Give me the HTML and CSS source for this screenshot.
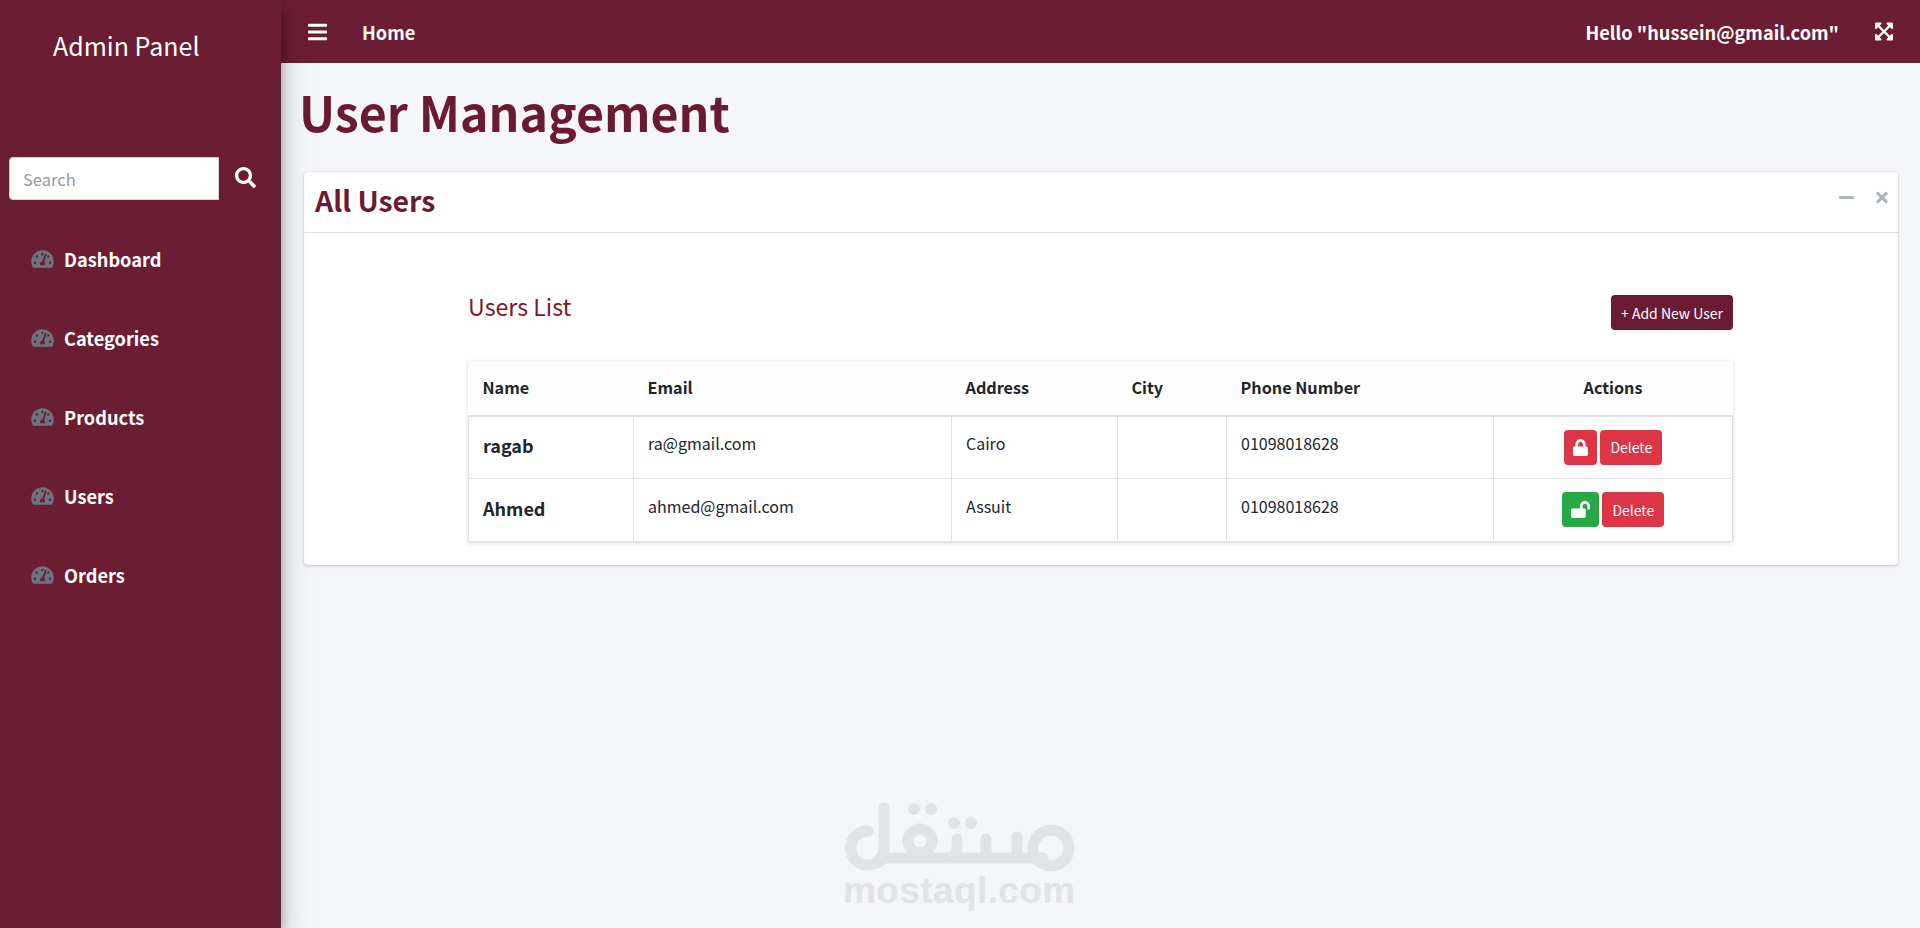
FILE: index.html
```html
<!DOCTYPE html>
<html lang="en">
<head>
<meta charset="UTF-8">
<meta name="viewport" content="width=device-width, initial-scale=1.0">
<title>User Management</title>
<link rel="stylesheet" href="styles.css">
</head>
<body>
<svg class="sprite" aria-hidden="true">
    <symbol id="i-gauge" viewBox="0 0 576 512"><path d="M288 32C128.94 32 0 160.94 0 320c0 52.8 14.25 102.26 39.06 144.8 5.61 9.62 16.3 15.2 27.44 15.2h443c11.14 0 21.83-5.58 27.44-15.2C561.75 422.26 576 372.8 576 320c0-159.06-128.94-288-288-288zm0 64c14.71 0 26.58 10.13 30.32 23.65-1.11 2.26-2.64 4.23-3.45 6.67l-9.22 27.67c-5.13 3.49-10.97 6.01-17.64 6.01-17.67 0-32-14.33-32-32S270.33 96 288 96zM96 384c-17.67 0-32-14.33-32-32s14.33-32 32-32 32 14.33 32 32-14.33 32-32 32zm48-160c-17.67 0-32-14.33-32-32s14.33-32 32-32 32 14.33 32 32-14.33 32-32 32zm246.77-72.41l-61.33 184C343.13 347.33 352 364.54 352 384c0 11.72-3.38 22.55-8.88 32H232.88c-5.5-9.45-8.88-20.28-8.88-32 0-33.94 26.5-61.43 59.9-63.59l61.34-184.01c4.17-12.56 17.73-19.45 30.36-15.17 12.57 4.19 19.35 17.79 15.17 30.36zm14.66 57.2l15.52-46.55c3.47-1.29 7.13-2.23 11.05-2.23 17.67 0 32 14.33 32 32s-14.33 32-32 32c-11.38-.01-20.89-6.28-26.57-15.22zM480 384c-17.67 0-32-14.33-32-32s14.33-32 32-32 32 14.33 32 32-14.33 32-32 32z"/></symbol>
    <symbol id="i-search" viewBox="0 0 512 512"><path d="M505 442.7L405.3 343c-4.5-4.5-10.6-7-17-7H372c27.6-35.3 44-79.7 44-128C416 93.1 322.9 0 208 0S0 93.1 0 208s93.1 208 208 208c48.3 0 92.7-16.4 128-44v16.3c0 6.4 2.5 12.5 7 17l99.7 99.7c9.4 9.4 24.6 9.4 33.9 0l28.3-28.3c9.4-9.4 9.4-24.6.1-34zM208 336c-70.7 0-128-57.2-128-128 0-70.7 57.2-128 128-128 70.7 0 128 57.2 128 128 0 70.7-57.2 128-128 128z"/></symbol>
    <symbol id="i-bars" viewBox="0 0 448 512"><path d="M16 132h416c8.837 0 16-7.163 16-16V76c0-8.837-7.163-16-16-16H16C7.163 60 0 67.163 0 76v40c0 8.837 7.163 16 16 16zm0 160h416c8.837 0 16-7.163 16-16v-40c0-8.837-7.163-16-16-16H16c-8.837 0-16 7.163-16 16v40c0 8.837 7.163 16 16 16zm0 160h416c8.837 0 16-7.163 16-16v-40c0-8.837-7.163-16-16-16H16c-8.837 0-16 7.163-16 16v40c0 8.837 7.163 16 16 16z"/></symbol>
    <symbol id="i-expand" viewBox="0 0 448 512"><path d="M448 344v112a23.94 23.94 0 0 1-24 24H312c-21.39 0-32.09-25.9-17-41l36.2-36.2L224 295.6 116.77 402.9 153 439c15.09 15.1 4.39 41-17 41H24a23.94 23.94 0 0 1-24-24V344c0-21.4 25.89-32.1 41-17l36.19 36.2L184.46 256 77.18 148.7 41 185c-15.1 15.1-41 4.4-41-17V56a23.94 23.94 0 0 1 24-24h112c21.39 0 32.09 25.9 17 41l-36.2 36.2L224 216.4l107.23-107.3L295 73c-15.09-15.1-4.39-41 17-41h112a23.94 23.94 0 0 1 24 24v112c0 21.4-25.89 32.1-41 17l-36.19-36.2L263.54 256l107.28 107.3L407 327.1c15.1-15.2 41-4.5 41 16.9z"/></symbol>
    <symbol id="i-lock" viewBox="0 0 448 512"><path d="M400 224h-24v-72C376 68.2 307.8 0 224 0S72 68.2 72 152v72H48c-26.5 0-48 21.5-48 48v192c0 26.5 21.5 48 48 48h352c26.5 0 48-21.5 48-48V272c0-26.5-21.5-48-48-48zm-104 0H152v-72c0-39.7 32.3-72 72-72s72 32.3 72 72v72z"/></symbol>
    <symbol id="i-open" viewBox="0 0 576 512"><path d="M423.5 0C339.5.3 272 69.5 272 153.5V224H48c-26.5 0-48 21.5-48 48v192c0 26.5 21.5 48 48 48h352c26.5 0 48-21.5 48-48V272c0-26.5-21.5-48-48-48h-48v-71.1c0-39.6 31.7-72.5 71.3-72.9 40-.4 72.7 32.1 72.7 72v80c0 13.3 10.7 24 24 24h32c13.3 0 24-10.7 24-24v-80C576 68 507.5-.3 423.5 0z"/></symbol>
    <symbol id="i-minus" viewBox="0 0 448 512"><path d="M416 208H32c-17.67 0-32 14.33-32 32v32c0 17.67 14.33 32 32 32h384c17.67 0 32-14.33 32-32v-32c0-17.67-14.33-32-32-32z"/></symbol>
    <symbol id="i-times" viewBox="0 0 352 512"><path d="M242.72 256l100.07-100.07c12.28-12.28 12.28-32.19 0-44.48l-22.24-22.24c-12.28-12.28-32.19-12.28-44.48 0L176 189.28 75.93 89.21c-12.28-12.28-32.19-12.28-44.48 0L9.21 111.45c-12.28 12.28-12.28 32.19 0 44.48L109.28 256 9.21 356.07c-12.28 12.28-12.28 32.19 0 44.48l22.24 22.24c12.28 12.28 32.2 12.28 44.48 0L176 322.72l100.07 100.07c12.28 12.28 32.2 12.28 44.48 0l22.24-22.24c12.28-12.28 12.28-32.19 0-44.48L242.72 256z"/></symbol>
</svg>

<div class="wrapper">
    <aside class="sidebar">
        <div class="brand">Admin Panel</div>
        <form class="search">
            <input class="search-input" type="text" placeholder="Search">
            <svg class="search-icon"><use href="#i-search"/></svg>
        </form>
        <nav class="side-nav">
            <a class="side-link"><svg class="gauge"><use href="#i-gauge"/></svg>Dashboard</a>
            <a class="side-link"><svg class="gauge"><use href="#i-gauge"/></svg>Categories</a>
            <a class="side-link"><svg class="gauge"><use href="#i-gauge"/></svg>Products</a>
            <a class="side-link"><svg class="gauge"><use href="#i-gauge"/></svg>Users</a>
            <a class="side-link"><svg class="gauge"><use href="#i-gauge"/></svg>Orders</a>
        </nav>
    </aside>

    <div class="content">
        <header class="topbar">
            <svg class="bars"><use href="#i-bars"/></svg>
            <span class="home">Home</span>
            <span class="hello">Hello "hussein@gmail.com"</span>
            <svg class="expand"><use href="#i-expand"/></svg>
        </header>

        <main class="page">
            <h1 class="page-title">User Management</h1>
            <section class="card">
                <div class="card-header">
                    <h2 class="card-title">All Users</h2>
                    <div class="card-tools">
                        <svg class="tool-minus"><use href="#i-minus"/></svg>
                        <svg class="tool-times"><use href="#i-times"/></svg>
                    </div>
                </div>
                <div class="card-body">
                    <div class="list-head">
                        <h3 class="list-title">Users List</h3>
                        <a class="btn btn-add">+ Add New User</a>
                    </div>
                    <table class="users">
                        <colgroup>
                            <col class="c-name"><col class="c-email"><col class="c-address"><col class="c-city"><col class="c-phone"><col class="c-actions">
                        </colgroup>
                        <thead>
                            <tr>
                                <th>Name</th>
                                <th>Email</th>
                                <th>Address</th>
                                <th>City</th>
                                <th>Phone Number</th>
                                <th class="center">Actions</th>
                            </tr>
                        </thead>
                        <tbody>
                            <tr>
                                <td class="name">ragab</td>
                                <td>ra@gmail.com</td>
                                <td>Cairo</td>
                                <td></td>
                                <td>01098018628</td>
                                <td class="actions">
                                    <a class="btn btn-red btn-icon"><svg class="lock"><use href="#i-lock"/></svg></a>
                                    <a class="btn btn-red">Delete</a>
                                </td>
                            </tr>
                            <tr class="row-last">
                                <td class="name">Ahmed</td>
                                <td>ahmed@gmail.com</td>
                                <td>Assuit</td>
                                <td></td>
                                <td>01098018628</td>
                                <td class="actions">
                                    <a class="btn btn-green btn-icon"><svg class="unlock"><use href="#i-open"/></svg></a>
                                    <a class="btn btn-red">Delete</a>
                                </td>
                            </tr>
                        </tbody>
                    </table>
                </div>
            </section>
        </main>
    </div>
</div>

<!-- site watermark laid over the page -->
<div class="watermark">
    <svg class="wm-logo" viewBox="0 0 232 68">
        <g fill="none" stroke="#e1e3e6" stroke-width="11" stroke-linecap="round">
            <path d="M25 28 A17 17 0 0 0 24 62 Q35 62 41 55 H200"/>
            <path d="M41 5 V44 Q41 54 34 58"/>
            <circle cx="77" cy="38" r="12"/>
            <path d="M114 36 V46 Q114 55 104 55"/>
            <path d="M143 36 V55"/>
            <path d="M174 34 V55"/>
            <circle cx="208" cy="45" r="18"/>
        </g>
        <g fill="#e1e3e6">
            <circle cx="71" cy="6" r="6"/>
            <circle cx="88" cy="6" r="6"/>
            <circle cx="111" cy="20" r="6"/>
            <circle cx="128" cy="20" r="6"/>
        </g>
    </svg>
    <div class="wm-text">mostaql.com</div>
</div>
</body>
</html>
```

FILE: styles.css
```css
* {
    box-sizing: border-box;
}
body {
    margin: 0;
    height: 928px;
    overflow: hidden;
    background-color: #f4f6f9;
    color: #212529;
    font-family: "Noto Sans CJK SC", "Open Sans", sans-serif;
    font-size: 16px;
    line-height: 24px;
}
h1, h2, h3 {
    margin: 0;
}
.sprite {
    display: none;
}
svg {
    fill: currentColor;
    flex: none;
}
.wrapper {
    display: flex;
    height: 928px;
}

/* sidebar */
.sidebar {
    position: relative;
    z-index: 2;
    width: 281px;
    flex: none;
    padding-top: 24px;
    background-color: #6b1d33;
    color: #fff;
    box-shadow: 0 14px 28px rgba(0, 0, 0, .25), 0 10px 10px rgba(0, 0, 0, .22);
}
.brand {
    margin-left: 53px;
    font-size: 25px;
    line-height: 42px;
    font-weight: 400;
}
.search {
    display: flex;
    align-items: center;
    margin: 91px 0 0 9px;
}
.search-input {
    width: 210px;
    height: 43px;
    padding: 0 13px;
    border: 1px solid #ced4da;
    border-radius: 4px 0 0 4px;
    background: #fff;
    font: 16.5px "Noto Sans CJK SC", sans-serif;
}
.search-input::placeholder {
    color: #939ba2;
}
.search-icon {
    width: 21px;
    height: 21px;
    margin: -3px 0 0 16px;
}
.side-nav {
    display: flex;
    flex-direction: column;
    gap: 49px;
    margin: 44px 0 0 31px;
}
.side-link {
    display: flex;
    align-items: center;
    height: 30px;
    font-size: 18.2px;
    font-weight: 700;
}
.gauge {
    width: 23px;
    height: 20px;
    margin-right: 10px;
    color: #6c757d;
}

/* top bar */
.content {
    flex: 1;
    min-width: 0;
}
.topbar {
    display: flex;
    align-items: center;
    height: 63px;
    padding: 0 27px 0 27px;
    background-color: #6b1d33;
    color: #fff;
    font-size: 18.2px;
    font-weight: 700;
}
.bars {
    width: 19px;
    height: 22px;
}
.home {
    margin-left: 35px;
}
.hello {
    margin-left: auto;
}
.expand {
    width: 18px;
    height: 21px;
    margin-left: 36px;
}

/* page */
.page {
    padding: 12px 22px 0 18px;
}
.page-title {
    color: #6b1a33;
    font-size: 48.3px;
    line-height: 72px;
    font-weight: 700;
}
.card {
    margin: 25px 0 0 5px;
    border-radius: 4px;
    background: #fff;
    box-shadow: 0 0 1px rgba(0, 0, 0, .125), 0 1px 3px rgba(0, 0, 0, .2);
}
.card-header {
    display: flex;
    justify-content: space-between;
    height: 61px;
    padding: 8px 10px 0 11px;
    border-bottom: 1px solid #dfdfdf;
}
.card-title {
    color: #6b1a33;
    font-size: 28.4px;
    line-height: 40px;
    font-weight: 700;
}
.card-tools {
    display: flex;
    gap: 22px;
    padding-top: 9px;
    color: #adb5bd;
}
.tool-minus {
    width: 15px;
    height: 17px;
}
.tool-times {
    width: 12px;
    height: 17px;
}
.card-body {
    padding: 62px 165px 23px 164px;
}
.list-head {
    display: flex;
    justify-content: space-between;
    align-items: flex-start;
    margin-bottom: 31px;
}
.list-title {
    margin-top: -5px;
    color: #7b1a2e;
    font-size: 23.2px;
    line-height: 32px;
    font-weight: 400;
}

/* buttons */
.btn {
    display: inline-flex;
    align-items: center;
    justify-content: center;
    height: 35px;
    padding: 0 10px;
    border-radius: 4px;
    color: #fff;
    font-size: 14px;
}
.btn-add {
    background-color: #6b1a33;
}
.btn-red {
    background-color: #dc3545;
}
.btn-green {
    background-color: #28a745;
}
.btn-icon {
    padding: 0 9px;
}
.lock {
    width: 15px;
    height: 17px;
}
.unlock {
    width: 19px;
    height: 17px;
}

/* table */
.users {
    width: 100%;
    table-layout: fixed;
    border-collapse: collapse;
    background: #fff;
    box-shadow: 0 1px 4px rgba(0, 0, 0, .16);
}
.c-name { width: 165px; }
.c-email { width: 318px; }
.c-address { width: 166px; }
.c-city { width: 109px; }
.c-phone { width: 267px; }
.users th {
    height: 55px;
    padding: 0 14px 2px;
    border-bottom: 2px solid #dee2e6;
    background-color: #fdfdfd;
    font-size: 16.2px;
    font-weight: 700;
    text-align: left;
}
.users th.center {
    text-align: center;
}
.users td {
    height: 62px;
    padding: 0 14px 8px;
    border: 1px solid #dee2e6;
    font-size: 16px;
}
.users .row-last td {
    height: 63px;
}
.users td.name {
    padding-bottom: 4px;
    font-size: 18px;
    font-weight: 700;
}
.users td.actions {
    padding: 0;
    text-align: center;
}
.actions .btn {
    vertical-align: middle;
}

/* watermark */
.watermark {
    position: absolute;
    left: 843px;
    top: 803px;
    z-index: 3;
    width: 232px;
}
.wm-logo {
    display: block;
    width: 232px;
    height: 68px;
    overflow: visible;
}
.wm-text {
    margin-top: 1px;
    color: #e1e3e6;
    font-family: "Liberation Sans", sans-serif;
    font-size: 37px;
    line-height: 38px;
    font-weight: 700;
    letter-spacing: .4px;
    white-space: nowrap;
}
```
